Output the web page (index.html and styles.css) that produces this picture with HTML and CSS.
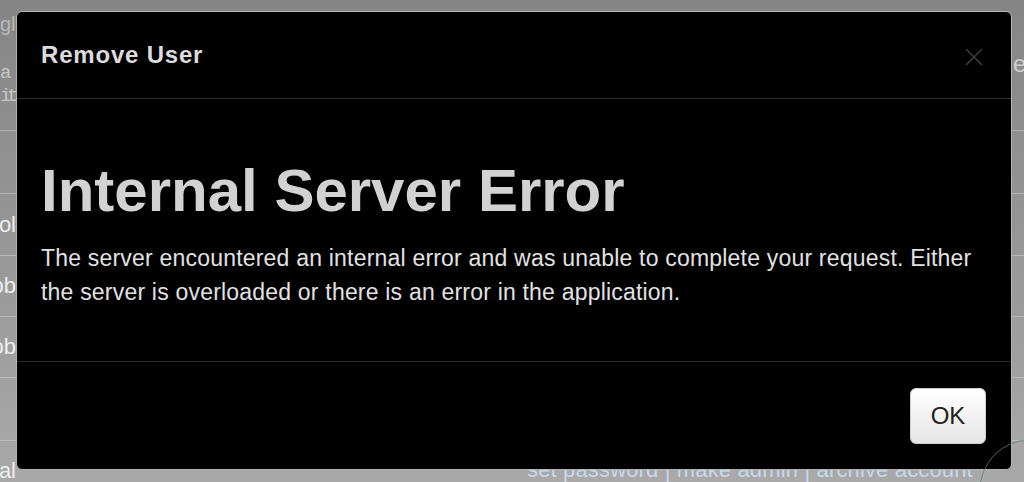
FILE: index.html
```html
<!DOCTYPE html>
<html lang="en">
<head>
    <meta charset="UTF-8">
    <meta name="viewport" content="width=device-width, initial-scale=1.0">
    <title>Users</title>
    <link rel="stylesheet" href="styles.css">
</head>
<body>
    <!-- user list behind the dialog -->
    <div class="user-list">
        <div class="user-row row-top">
            <div class="cell-top">
                <span class="name">gle</span>
                <span class="mono first">a r</span>
                <span class="mono">it</span>
            </div>
            <div class="cell-main"></div>
            <div class="cell-right"><span class="right-text">e</span></div>
        </div>
        <div class="user-row row-63"></div>
        <div class="user-row row-62">
            <div class="cell-left"><span>ol</span></div>
        </div>
        <div class="user-row row-61">
            <div class="cell-left"><span>ob</span></div>
        </div>
        <div class="user-row row-61">
            <div class="cell-left"><span>ob</span></div>
        </div>
        <div class="user-row row-63"></div>
        <div class="user-row row-last">
            <div class="cell-left"><span>al</span></div>
            <div class="cell-main">
                <div class="actions">set password | make admin | archive account</div>
            </div>
        </div>
    </div>

    <!-- modal -->
    <div class="modal">
        <div class="modal-header">
            <h3>Remove User</h3>
            <svg class="close" width="22" height="22" viewBox="0 0 22 22">
                <path d="M3 3 L19 19 M19 3 L3 19" stroke="#3c3c3c" stroke-width="1.6" fill="none"/>
            </svg>
        </div>
        <div class="modal-body">
            <h1>Internal Server Error</h1>
            <p>The server encountered an internal error and was unable to complete your request. Either the server is overloaded or there is an error in the application.</p>
        </div>
        <div class="modal-footer">
            <button class="btn">OK</button>
        </div>
    </div>

    <!-- loading ring in the corner -->
    <svg class="spinner" width="60" height="60" viewBox="0 0 60 60">
        <circle cx="66" cy="68" r="50" fill="none" stroke="#5f7d78" stroke-width="1"/>
    </svg>
</body>
</html>
```

FILE: styles.css
```css
body {
    margin: 0;
    height: 482px;
    overflow: hidden;
    position: relative;
    font-family: "Liberation Sans", Arial, sans-serif;
    background: linear-gradient(#858585, #a9a9a9);
}
.user-list {
    display: flex;
    flex-direction: column;
}
.user-row {
    display: flex;
    border-bottom: 1px solid rgba(220,220,220,0.45);
    box-sizing: border-box;
}
.row-top { height: 131px; }
.row-63 { height: 63px; }
.row-62 { height: 62px; }
.row-61 { height: 61px; }
.row-last { height: 60px; border-bottom: none; }
.cell-left {
    width: 16px;
    display: flex;
    flex-direction: column;
    justify-content: center;
    align-items: flex-end;
    color: #eeeeee;
    font-size: 22px;
    white-space: nowrap;
}
.cell-top {
    width: 16px;
    display: flex;
    flex-direction: column;
    white-space: nowrap;
    color: #c6c6c6;
    padding-top: 12px;
}
.cell-top .name {
    font-size: 20px;
    line-height: 24px;
    color: #b8b8b8;
}
.cell-top .mono {
    font-family: "Liberation Mono", monospace;
    font-size: 19px;
    letter-spacing: -4.5px;
    line-height: 23px;
}
.cell-top .first {
    margin-top: 26px;
}
.cell-main {
    flex: 1;
}
.cell-right {
    width: 12px;
    overflow: hidden;
    padding-top: 50px;
}
.right-text {
    color: #cfcfcf;
    font-size: 24px;
    margin-left: 1px;
}
.actions {
    margin: 16px 0 0 511px;
    line-height: 26px;
    color: #c9d8ea;
    font-size: 22px;
    letter-spacing: 0.15px;
    white-space: nowrap;
}
.spinner {
    position: absolute;
    right: 0;
    bottom: 0;
    opacity: 0.8;
}
.modal {
    position: absolute;
    left: 16px;
    top: 11px;
    width: 996px;
    height: 459px;
    box-sizing: border-box;
    background: #000;
    border: 1px solid #b4b4b4;
    border-radius: 6px;
    display: flex;
    flex-direction: column;
}
.modal-header {
    height: 87px;
    display: flex;
    align-items: center;
    justify-content: space-between;
    padding: 0 26px 0 24px;
    border-bottom: 1px solid #2a2a2a;
    box-sizing: border-box;
}
.modal-header h3 {
    margin: 0;
    color: #dcdcdc;
    font-size: 24px;
    letter-spacing: 0.8px;
    font-weight: bold;
}
.close {
    margin-top: 4px;
}
.modal-body {
    flex: 1;
    padding: 59px 24px 0 24px;
    border-bottom: 1px solid #2a2a2a;
}
.modal-body h1 {
    margin: 0;
    font-size: 60px;
    line-height: 65px;
    color: #d2d2d2;
    font-weight: bold;
}
.modal-body p {
    margin: 18px 0 0 0;
    font-size: 23px;
    letter-spacing: 0.2px;
    line-height: 34px;
    color: #e2e2e2;
}
.modal-footer {
    height: 107px;
    display: flex;
    justify-content: flex-end;
    align-items: flex-start;
    padding: 26px 25px 0 0;
    box-sizing: border-box;
}
.btn {
    width: 76px;
    height: 56px;
    background: linear-gradient(#ffffff, #e4e4e4);
    border: 1px solid #cfcfcf;
    border-radius: 6px;
    font-family: "Liberation Sans", Arial, sans-serif;
    font-size: 24px;
    color: #222;
    cursor: pointer;
}
```
